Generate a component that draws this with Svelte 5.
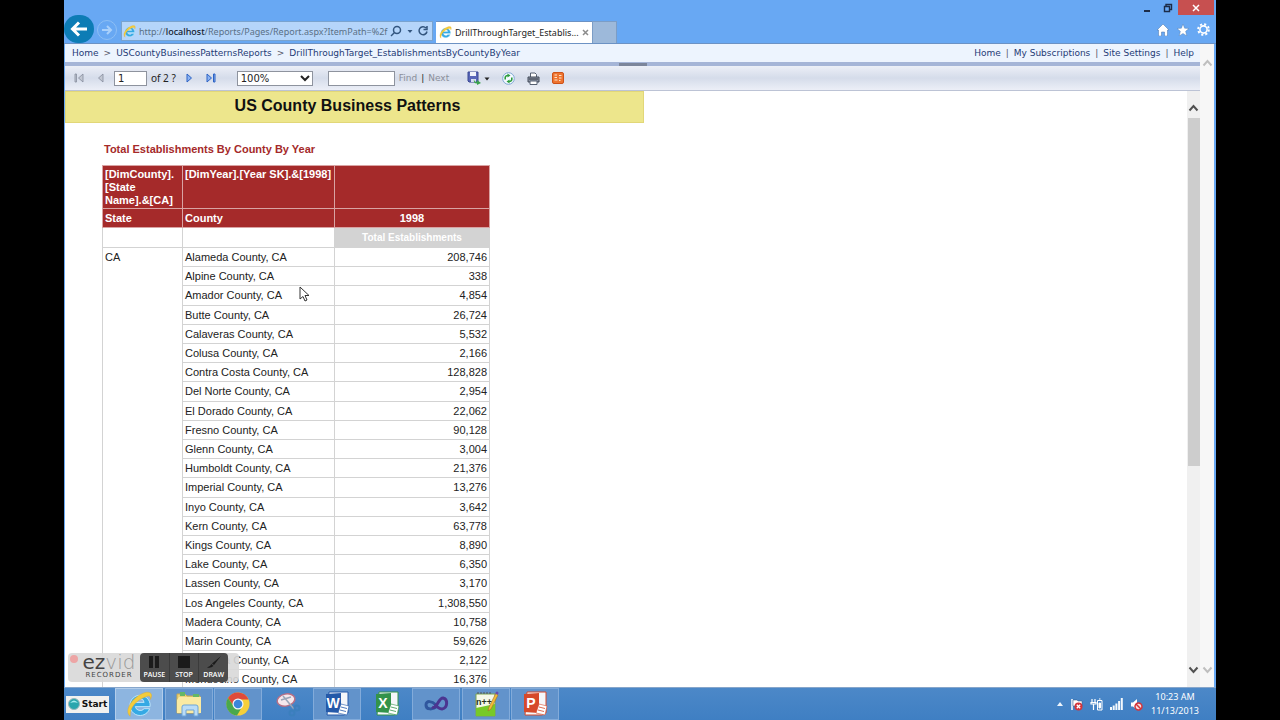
<script lang="ts">
	const rows: [string, string][] = [
		['Alameda', '208,746'],
		['Alpine', '338'],
		['Amador', '4,854'],
		['Butte', '26,724'],
		['Calaveras', '5,532'],
		['Colusa', '2,166'],
		['Contra Costa', '128,828'],
		['Del Norte', '2,954'],
		['El Dorado', '22,062'],
		['Fresno', '90,128'],
		['Glenn', '3,004'],
		['Humboldt', '21,376'],
		['Imperial', '13,276'],
		['Inyo', '3,642'],
		['Kern', '63,778'],
		['Kings', '8,890'],
		['Lake', '6,350'],
		['Lassen', '3,170'],
		['Los Angeles', '1,308,550'],
		['Madera', '10,758'],
		['Marin', '59,626'],
		['Mariposa', '2,122'],
		['Mendocino', '16,376']
	];

	const apps = [
		{ id: 'ie', label: 'Internet Explorer', state: 'active' },
		{ id: 'explorer', label: 'File Explorer', state: 'open' },
		{ id: 'chrome', label: 'Google Chrome', state: 'open' },
		{ id: 'snip', label: 'Snipping Tool', state: '' },
		{ id: 'word', label: 'Word', state: 'open' },
		{ id: 'excel', label: 'Excel', state: '' },
		{ id: 'vs', label: 'Visual Studio', state: 'open' },
		{ id: 'npp', label: 'Notepad++', state: 'open' },
		{ id: 'ppt', label: 'PowerPoint', state: 'open' }
	];

	let page = $state('1');
	let zoom = $state('100%');
	let search = $state('');
</script>

{#snippet ieLogo(size: number)}
	<svg width={size} height={size} viewBox="0 0 32 32" aria-hidden="true">
		<path
			d="M28 21A12 12 0 1 1 28.500 15V18.500H11A6 6 0 0 0 21.500 21ZM11 13.500H21.500A5.300 5.300 0 0 0 11 13.500Z"
			fill="#35a9e4"
			stroke="#c9efff"
			stroke-width="1"
			fill-rule="evenodd"
		/>
		<path
			d="M5 30C-3 24 7 7 22 2C30 0 32 4 29 10C29.500 5.500 27 5 23 7C12 11 4 20 5 30Z"
			fill="#f3cc3c"
			stroke="#e0a92c"
			stroke-width=".5"
		/>
	</svg>
{/snippet}

{#snippet officeIcon(letter: string, color: string)}
	<svg width="26" height="26" viewBox="0 0 26 26" aria-hidden="true">
		<path d="M5 1H24V22L20 24H3Z" fill="#f5f7fa" stroke={color} />
		<path d="M2 3L17 2V22L2 21Z" fill={color} />
		<path d="M17 13L25 15L23 24L14 22Z" fill="#fff" stroke={color} stroke-width=".6" />
		<path d="M17 16L23 17.500M16 19L22 20.500" stroke={color} stroke-width=".8" />
		<text x="9" y="17" text-anchor="middle" font-size="14" font-weight="bold" fill="#fff">
			{letter}
		</text>
	</svg>
{/snippet}

<div class="screen">
	<div class="browser">
		<header class="chrome">
			<div class="window-buttons">
				<button aria-label="Minimize">
					<svg width="10" height="10" viewBox="0 0 10 10"><path d="M2 8H8" stroke="#1c2c48" stroke-width="2" /></svg>
				</button>
				<button aria-label="Restore">
					<svg width="10" height="10" viewBox="0 0 10 10" fill="none" stroke="#1c2c48">
						<path d="M3 3V1.500H8.500V6.500H7M1.500 3.500H6.500V8.500H1.500Z" stroke-width="1.400" />
					</svg>
				</button>
				<button class="close" aria-label="Close">
					<svg width="8" height="8" viewBox="0 0 8 8"><path d="M1 1L7 7M7 1L1 7" stroke="#fff" stroke-width="1.500" /></svg>
				</button>
			</div>

			<div class="nav-row">
				<button class="back" aria-label="Back">
					<svg width="18" height="18" viewBox="0 0 18 18" fill="none" stroke="#fff" stroke-width="3">
						<path d="M17 9H3M9 2.500L2.500 9L9 15.500" />
					</svg>
				</button>
				<button class="forward" aria-label="Forward">
					<svg width="12" height="12" viewBox="0 0 12 12" fill="none" stroke="#a9d0fb" stroke-width="2">
						<path d="M1 6H10M6 2L10 6L6 10" />
					</svg>
				</button>
				<div class="address">
					{@render ieLogo(13)}
					<span class="url">http://<b>localhost</b>/Reports/Pages/Report.aspx?ItemPath=%2f</span>
					<button aria-label="Search">
						<svg width="12" height="12" viewBox="0 0 12 12" fill="none" stroke="#33567f" stroke-width="1.500">
							<circle cx="7" cy="5" r="3.500" /><path d="M4.500 7.500L1 11" />
						</svg>
					</button>
					<button aria-label="Show address list">
						<svg width="8" height="8" viewBox="0 0 8 8"><path d="M1.500 3H6.500L4 6Z" fill="#33567f" /></svg>
					</button>
					<button aria-label="Refresh">
						<svg width="12" height="12" viewBox="0 0 12 12" fill="none" stroke="#33567f" stroke-width="1.500">
							<path d="M9 3A4 4 0 1 0 10 6.500M10 1V4.500H6.500" />
						</svg>
					</button>
				</div>
				<div class="tab">
					{@render ieLogo(13)}
					<span>DrillThroughTarget_Establis...</span>
					<button aria-label="Close tab">
						<svg width="7" height="7" viewBox="0 0 7 7"><path d="M1 1L6 6M6 1L1 6" stroke="#8c8c8c" stroke-width="1.500" /></svg>
					</button>
				</div>
				<button class="new-tab" aria-label="New tab"></button>
				<div class="tools">
					<button aria-label="Home">
						<svg width="12" height="12" viewBox="0 0 12 12"><path d="M6 0L12 6H10.500V12H7.500V8H4.500V12H1.500V6H0Z" fill="#fff" stroke="#4773a8" stroke-width=".5" /></svg>
					</button>
					<button aria-label="Favorites">
						<svg width="12" height="12" viewBox="0 0 12 12"><path d="M6 0L7.600 4.200L12 4.500L8.600 7.300L9.800 12L6 9.400L2.200 12L3.400 7.300L0 4.500L4.400 4.200Z" fill="#fff" stroke="#4773a8" stroke-width=".4" /></svg>
					</button>
					<button aria-label="Tools">
						<svg width="13" height="13" viewBox="0 0 13 13" fill="none" stroke="#fff">
							<circle cx="6.500" cy="6.500" r="3.600" stroke-width="1.600" />
							<circle cx="6.500" cy="6.500" r="5.300" stroke-width="2" stroke-dasharray="2.100 2.063" />
						</svg>
					</button>
				</div>
			</div>
		</header>

		<div class="page">
			<main>
				<div class="crumbs">
					<nav aria-label="Breadcrumb">
						<a href="#home">Home</a><i>&gt;</i>
						<a href="#reports">USCountyBusinessPatternsReports</a><i>&gt;</i>
						<a href="#report">DrillThroughTarget_EstablishmentsByCountyByYear</a>
					</nav>
					<nav aria-label="Site">
						<a href="#home">Home</a><i>|</i>
						<a href="#subscriptions">My Subscriptions</a><i>|</i>
						<a href="#settings">Site Settings</a><i>|</i>
						<a href="#help">Help</a>
					</nav>
				</div>
				<div class="splitter"><span></span></div>

				<div class="toolbar">
					<div class="pager">
						<button aria-label="First page">
							<svg width="10" height="10" viewBox="0 0 10 10" fill="#c2c7d2" stroke="#858d9d" stroke-width=".8"><path d="M1 1H2.500V9H1ZM9 1V9L4.500 5Z" /></svg>
						</button>
						<button aria-label="Previous page">
							<svg width="10" height="10" viewBox="0 0 10 10" fill="#c2c7d2" stroke="#858d9d" stroke-width=".8"><path d="M7 1V9L2.500 5Z" /></svg>
						</button>
						<input aria-label="Current page" bind:value={page} />
						<span class="of">of 2 ?</span>
						<button aria-label="Next page">
							<svg width="10" height="10" viewBox="0 0 10 10" fill="#8ab2f2" stroke="#2c62c4"><path d="M3 1V9L7.500 5Z" /></svg>
						</button>
						<button aria-label="Last page">
							<svg width="10" height="10" viewBox="0 0 10 10" fill="#8ab2f2" stroke="#2c62c4"><path d="M1 1V9L5.500 5ZM7.500 1H9V9H7.500Z" /></svg>
						</button>
					</div>
					<div class="zoom">
						<select aria-label="Zoom" bind:value={zoom}>
							<option>100%</option>
							<option>75%</option>
							<option>50%</option>
						</select>
						<svg width="10" height="7" viewBox="0 0 10 7" aria-hidden="true"><path d="M1 1L5 5L9 1" fill="none" stroke="#222" stroke-width="2" /></svg>
					</div>
					<div class="find">
						<input aria-label="Find text" bind:value={search} />
						<button>Find</button><span>|</span><button>Next</button>
					</div>
					<div class="actions">
						<button aria-label="Export">
							<svg width="23" height="14" viewBox="0 0 23 14">
								<path d="M1 1H11V11H2L1 10Z" fill="#5866b8" stroke="#3b4893" />
								<path d="M3 1H9V5H3Z" fill="#f0f3fb" /><path d="M4 8H9V11H4Z" fill="#d8dff2" />
								<path d="M7 8Q7 11 10 11V9L14 12L10 14V12.500Q6 12.500 7 8Z" fill="#3aa24c" />
								<path d="M17.500 6.500H22.500L20 9.500Z" fill="#222" />
							</svg>
						</button>
						<button aria-label="Refresh report">
							<svg width="13" height="13" viewBox="0 0 13 13" fill="none">
								<circle cx="6.500" cy="6.500" r="5.800" fill="#f4faff" stroke="#7ea7d4" />
								<path d="M3.200 7.500V5.500Q3.500 3.500 6 3.500M9.800 5.500V7.500Q9.500 9.500 7 9.500" stroke="#2c9c3c" stroke-width="1.600" />
								<path d="M5.500 1.500L8.500 3.500L5.500 5.500ZM7.500 7.500L4.500 9.500L7.500 11.500Z" fill="#2c9c3c" />
							</svg>
						</button>
						<button aria-label="Print">
							<svg width="13" height="13" viewBox="0 0 13 13">
								<path d="M3.500 5V1H8L9.500 2.500V5" fill="#fff" stroke="#555f70" />
								<path d="M1 5H12V10H1Z" fill="#8b93a3" stroke="#434a58" /><path d="M2 7H11" stroke="#353b47" />
								<path d="M3 9H10V12.500H3Z" fill="#fff" stroke="#555f70" />
							</svg>
						</button>
						<button aria-label="Export to data feed">
							<svg width="12" height="12" viewBox="0 0 12 12">
								<rect x=".5" y=".5" width="11" height="11" rx="1.500" fill="#ee7430" stroke="#cd5218" />
								<path d="M2.500 3H5M2.500 5.500H5M2.500 8H5.500M7 3.500H9.500M7 6H9.500M7 8.500H8.500" stroke="#ffe5cb" stroke-width="1.200" />
							</svg>
						</button>
					</div>
				</div>

				<div class="viewer">
					<article class="report">
						<h1>US County Business Patterns</h1>
						<h2>Total Establishments By County By Year</h2>
						<table>
							<colgroup><col class="c-state" /><col class="c-county" /><col class="c-total" /></colgroup>
							<thead>
								<tr class="params">
									<th>[DimCounty].<br />[State<br />Name].&amp;[CA]</th>
									<th>[DimYear].[Year SK].&amp;[1998]</th>
									<th></th>
								</tr>
								<tr><th>State</th><th>County</th><th class="center">1998</th></tr>
								<tr class="measure"><td></td><td></td><th>Total Establishments</th></tr>
							</thead>
							<tbody>
								{#each rows as [county, total], i}
									<tr>
										{#if i === 0}<td rowspan={rows.length}>CA</td>{/if}
										<td>{county} County, CA</td>
										<td class="num">{total}</td>
									</tr>
								{/each}
							</tbody>
						</table>
						<svg class="cursor" width="11" height="16" viewBox="0 0 11 16" aria-hidden="true">
							<path d="M1 1V13L4 10.500L6 15L8 14L6 9.500H10Z" fill="#fff" stroke="#333" />
						</svg>
					</article>
					<div class="scrollbar inner">
						<svg width="11" height="8" viewBox="0 0 11 8"><path d="M1.500 6.500L5.500 2L9.500 6.500" /></svg>
						<div class="thumb"></div>
						<svg width="11" height="8" viewBox="0 0 11 8"><path d="M1.500 1.500L5.500 6L9.500 1.500" /></svg>
					</div>

					<div class="recorder">
						<span class="dot"></span>
						<div class="brand"><span>ez<em>vid</em></span><small>RECORDER</small></div>
						<div class="rec-buttons">
							<button>
								<svg width="12" height="12" viewBox="0 0 12 12"><path d="M1 0H5V12H1ZM7 0H11V12H7Z" /></svg>
								PAUSE
							</button>
							<button>
								<svg width="12" height="12" viewBox="0 0 12 12"><path d="M0 0H12V12H0Z" /></svg>
								STOP
							</button>
							<button>
								<svg width="14" height="12" viewBox="0 0 14 12"><path d="M14 0L7 9L5 7.500ZM4.500 8L6.500 10Q4 12.500 0 11.500Q3 11 4.500 8Z" /></svg>
								DRAW
							</button>
						</div>
					</div>
				</div>
			</main>
			<div class="scrollbar outer">
				<svg width="11" height="8" viewBox="0 0 11 8"><path d="M1.500 6.500L5.500 2L9.500 6.500" /></svg>
				<svg width="11" height="8" viewBox="0 0 11 8"><path d="M1.500 1.500L5.500 6L9.500 1.500" /></svg>
			</div>
		</div>
	</div>

	<footer class="taskbar">
		<button class="start">
			<svg width="12" height="12" viewBox="0 0 12 12" aria-hidden="true">
				<circle cx="6" cy="6" r="5.500" fill="#2aa6ad" stroke="#9ab8bd" /><path d="M2 5Q6 0 10 5Q6 3.500 2 5Z" fill="#a5eef0" />
			</svg>
			Start
		</button>
		<div class="apps">
			{#each apps as app}
				<button class={app.state} aria-label={app.label}>
					{#if app.id === 'ie'}
						{@render ieLogo(27)}
					{:else if app.id === 'explorer'}
						<svg width="28" height="26" viewBox="0 0 28 26">
							<path d="M2 3H10L12 5H25V22H2Z" fill="#ead27a" stroke="#c9a94e" />
							<path d="M5 1H10V5H5ZM18 3H24V7H18Z" fill="#65b766" /><path d="M4 6H26V22H2V9Z" fill="#faeaa2" />
							<path d="M7 25V16Q7 14 9 14H21Q23 14 23 16V25H19V19H11V25Z" fill="#b9dcf7" stroke="#6ca5d8" />
						</svg>
					{:else if app.id === 'chrome'}
						<svg width="24" height="24" viewBox="0 0 24 24">
							<circle cx="12" cy="12" r="11.500" fill="#f5cf3b" />
							<path d="M2 6A11.500 11.500 0 0 1 22.500 7.500H12L7 13Z" fill="#df4b3b" />
							<path d="M2 6A11.500 11.500 0 0 0 11 23.500L16 15L7.500 14Z" fill="#49a84c" />
							<circle cx="12" cy="12" r="5.500" fill="#f3f6f9" /><circle cx="12" cy="12" r="4.300" fill="#3b86d9" />
						</svg>
					{:else if app.id === 'snip'}
						<svg width="26" height="26" viewBox="0 0 26 26" fill="none">
							<ellipse cx="11" cy="9" rx="9" ry="6" transform="rotate(-12 11 9)" fill="#f5e8ed" stroke="#b76f85" stroke-width="1.500" />
							<path d="M6 9L16 6M8 5L19 18" stroke="#9aa5b7" stroke-width="1.500" />
							<circle cx="22" cy="17" r="2.500" stroke="#3b7fbd" stroke-width="2" /><circle cx="17" cy="22" r="2.500" stroke="#3b7fbd" stroke-width="2" />
						</svg>
					{:else if app.id === 'word'}
						{@render officeIcon('W', '#2459a9')}
					{:else if app.id === 'excel'}
						{@render officeIcon('X', '#33934a')}
					{:else if app.id === 'vs'}
						<svg width="26" height="18" viewBox="0 0 26 18" fill="none" stroke-width="3">
							<path d="M14 11C10 15 3 15 3 10C3 5 9 6 13 10" stroke="#30579e" />
							<path d="M9 12C14 15 15 3 20 3C25 4 25 13 19 14C16 14 14 12 12 9" stroke="#4b3591" />
						</svg>
					{:else if app.id === 'npp'}
						<svg width="26" height="26" viewBox="0 0 26 26">
							<path d="M3 3H22V25H3Z" fill="#f4f8e8" stroke="#7ba451" /><path d="M3 17L22 13V25H3Z" fill="#77c928" />
							<path d="M5 3V1M8 3V1M11 3V1M14 3V1M17 3V1" stroke="#555" />
							<text x="11" y="14" text-anchor="middle" font-size="9" font-weight="bold" fill="#273320">n++</text>
							<path d="M23 2L25 4L18 18L15 20L16 16Z" fill="#f2bd38" stroke="#a06b2a" stroke-width=".6" /><circle cx="24" cy="2" r="1.500" fill="#694aaf" />
						</svg>
					{:else}
						{@render officeIcon('P', '#d6492a')}
					{/if}
				</button>
			{/each}
		</div>
		<div class="tray">
			<svg width="6" height="4" viewBox="0 0 6 4"><path d="M0 4L3 0L6 4Z" fill="#eef5fc" /></svg>
			<svg width="13" height="13" viewBox="0 0 13 13">
				<path d="M2 1V12" stroke="#fff" stroke-width="1.500" /><path d="M3 2H7L8 3H12V8H3Z" fill="#fff" stroke="#34557c" stroke-width=".5" />
				<circle cx="8.500" cy="8.500" r="4" fill="#d3343b" /><path d="M6.800 6.800L10.200 10.200M10.200 6.800L6.800 10.200" stroke="#fff" stroke-width="1.300" />
			</svg>
			<svg width="13" height="13" viewBox="0 0 13 13" fill="none" stroke="#fff">
				<path d="M2 1V4M5 1V4M1 4.500H6V6H1ZM3.500 6V12" stroke-width="1.200" /><path d="M7.500 2.500H12V12H7.500ZM9 1H10.500" /><path d="M9 5H10.500V10H9Z" fill="#fff" />
			</svg>
			<svg width="13" height="12" viewBox="0 0 13 12"><path d="M0 9H2V12H0ZM2.700 7.500H4.700V12H2.700ZM5.400 5.500H7.400V12H5.400ZM8.100 3H10.100V12H8.100ZM10.800 0H12.800V12H10.800Z" fill="#f5f9fd" /></svg>
			<svg width="13" height="13" viewBox="0 0 13 13">
				<path d="M1 4.500H3L7 1V12L3 8.500H1Z" fill="#fff" /><circle cx="8.500" cy="8.500" r="3.500" fill="#f7dadb" stroke="#d3343b" stroke-width="1.500" /><path d="M6 6L11 11" stroke="#d3343b" stroke-width="1.500" />
			</svg>
			<div class="clock"><span>10:23 AM</span><span>11/13/2013</span></div>
		</div>
	</footer>
</div>

<style>
	:global(body) {
		margin: 0;
		background: #000;
	}

	.screen {
		height: 100vh;
		margin: 0 5%;
		display: flex;
		flex-direction: column;
		font-family: 'Liberation Sans', Arial, sans-serif;
		font-size: 11px;
		color: #222;
		overflow: hidden;
	}

	button {
		padding: 0;
		border: 0;
		background: none;
		font: inherit;
		color: inherit;
		display: flex;
		align-items: center;
		justify-content: center;
	}

	svg {
		flex: none;
	}

	.browser {
		flex: 1;
		min-height: 0;
		display: flex;
		flex-direction: column;
		background: #68a8f3;
	}

	.chrome {
		flex: none;
		border-bottom: 1px solid #6c92c4;
	}

	.window-buttons {
		display: flex;
		justify-content: flex-end;
		height: 15px;
		padding-right: 2px;
	}

	.window-buttons button {
		width: 21px;
	}

	.window-buttons .close {
		width: 36px;
		background: #c75050;
	}

	.nav-row {
		display: flex;
		align-items: flex-end;
		height: 28px;
	}

	.back {
		width: 30px;
		height: 28px;
		border-radius: 15px;
		background: #0d7cb5;
	}

	.forward {
		width: 20px;
		height: 20px;
		margin: 0 6px 3px 3px;
		border: 1px solid #8dbff5;
		border-radius: 50%;
		box-sizing: border-box;
	}

	.address {
		display: flex;
		align-items: center;
		gap: 3px;
		width: 312px;
		height: 20px;
		padding: 0 3px 0 1px;
		margin: 0 3px 2px -2px;
		box-sizing: border-box;
		border: 1px solid #79a3cf;
		background: #b5d5fa;
		font-family: 'Noto Sans', sans-serif;
		font-size: 9px;
		color: #5a7086;
	}

	.url {
		flex: 1;
		white-space: nowrap;
	}

	.url b {
		font-weight: 500;
		color: #14202e;
	}

	.address button {
		width: 12px;
	}

	.tab {
		display: flex;
		align-items: center;
		gap: 3px;
		width: 156px;
		height: 22px;
		padding: 0 4px 0 3px;
		box-sizing: border-box;
		border-top: 1px solid #6c92c4;
		background: #fff;
		font-family: 'Noto Sans', sans-serif;
		font-size: 9px;
		white-space: nowrap;
	}

	.tab span {
		flex: 1;
	}

	.new-tab {
		width: 25px;
		height: 22px;
		border: 1px solid #7b9dc6;
		border-bottom: 0;
		background: #9db9da;
		box-sizing: border-box;
	}

	.tools {
		display: flex;
		gap: 8px;
		margin: 0 6px 7px auto;
	}

	.page {
		flex: 1;
		min-height: 0;
		display: flex;
		margin: 0 2px 0 1px;
		background: #fff;
	}

	main {
		flex: 1;
		min-width: 0;
		display: flex;
		flex-direction: column;
	}

	.crumbs {
		display: flex;
		justify-content: space-between;
		padding: 0 6px 0 7px;
		line-height: 18px;
		background: #edf4fe;
		font-family: 'DejaVu Sans', Verdana, sans-serif;
		font-size: 9px;
		white-space: nowrap;
	}

	.crumbs nav {
		display: flex;
		gap: 5px;
	}

	.crumbs a {
		color: #1f3b76;
		text-decoration: none;
	}

	.crumbs i {
		font-style: normal;
		color: #55596a;
	}

	.splitter {
		display: flex;
		justify-content: center;
		align-items: flex-end;
		height: 4px;
		background: #a5b5d7;
	}

	.splitter span {
		width: 28px;
		height: 3px;
		background: #7c869b;
	}

	.toolbar {
		display: flex;
		align-items: center;
		height: 24px;
		padding-left: 9px;
		border-bottom: 1px solid #bcc3d5;
		background: linear-gradient(#eceff7, #d5dcea 50%, #eceff7);
		font-family: 'DejaVu Sans', Verdana, sans-serif;
		font-size: 10px;
		white-space: nowrap;
	}

	.toolbar input,
	select {
		height: 15px;
		padding: 0 3px;
		border: 1px solid #8e939e;
		border-radius: 0;
		box-sizing: border-box;
		background: #fff;
		color: #222;
		font: inherit;
	}

	.pager {
		display: flex;
		align-items: center;
		gap: 12px;
	}

	.pager input {
		width: 33px;
		margin-left: -4px;
	}

	.of {
		margin: 0 -4px 0 -8px;
		font-family: 'Noto Sans', sans-serif;
	}

	.zoom {
		position: relative;
		display: flex;
		margin-left: 21px;
	}

	.zoom select {
		width: 76px;
		appearance: none;
	}

	.zoom svg {
		position: absolute;
		right: 3px;
		top: 4px;
		pointer-events: none;
	}

	.find {
		display: flex;
		align-items: center;
		gap: 4px;
		margin-left: 15px;
		font-size: 9px;
	}

	.find input {
		width: 67px;
	}

	.find button {
		color: #8b8f9a;
	}

	.actions {
		display: flex;
		align-items: center;
		gap: 12px;
		margin-left: 18px;
	}

	.viewer {
		position: relative;
		flex: 1;
		min-height: 0;
		display: flex;
		overflow: hidden;
	}

	.report {
		position: relative;
		flex: 1;
		min-width: 0;
		overflow: hidden;
	}

	h1 {
		width: 579px;
		margin: 0;
		padding: 0 14px 2px 0;
		box-sizing: border-box;
		border: 1px solid #e2d778;
		background: #ede68c;
		font-size: 16px;
		line-height: 28px;
		text-align: center;
		color: #111;
	}

	h2 {
		margin: 18px 0 8px 39px;
		font-size: 11px;
		line-height: 16px;
		color: #a52a2a;
	}

	table {
		width: 388px;
		margin-left: 37px;
		border-collapse: collapse;
		table-layout: fixed;
		line-height: 13px;
	}

	.c-state {
		width: 80px;
	}

	.c-county {
		width: 152px;
	}

	th,
	td {
		height: 19px;
		padding: 3px 2px 0;
		box-sizing: border-box;
		border: 1px solid #d3d3d3;
		vertical-align: top;
		text-align: left;
		white-space: nowrap;
	}

	th {
		background: #a52a2a;
		border-color: #d9a3a3;
		color: #fff;
	}

	.center,
	.measure th {
		text-align: center;
	}

	.measure th {
		border-color: #d3d3d3;
		background: #d3d3d3;
		font-size: 10px;
	}

	.measure td,
	.measure th {
		height: 20px;
	}

	.params th {
		height: 43px;
		padding-top: 2px;
	}

	tbody {
		height: 442px;
	}

	td.num {
		text-align: right;
	}

	.cursor {
		position: absolute;
		left: 234px;
		top: 195px;
	}

	.scrollbar {
		flex: none;
		display: flex;
		flex-direction: column;
		align-items: center;
		justify-content: space-between;
		width: 13px;
		box-sizing: border-box;
		background: #f0f0f0;
	}

	.scrollbar path {
		fill: none;
		stroke: #505050;
		stroke-width: 2;
	}

	.inner {
		padding: 13px 0;
	}

	.thumb {
		width: 12px;
		height: 61%;
		margin: 6px 0 auto;
		background: #cdcdcd;
	}

	.outer {
		width: 14px;
		padding: 15px 0 13px;
		background: #f7f7f7;
	}

	.outer path {
		stroke: #bfbfbf;
	}

	.recorder {
		position: absolute;
		left: 3px;
		bottom: 5px;
		display: flex;
		width: 171px;
		height: 29px;
		border-radius: 4px;
		background: rgba(216, 216, 216, 0.9);
	}

	.dot {
		width: 8px;
		height: 8px;
		margin: 2px 0 0 2px;
		border-radius: 50%;
		background: #eda5a5;
	}

	.brand {
		display: flex;
		flex-direction: column;
		width: 62px;
		align-items: center;
		font-family: 'DejaVu Sans', sans-serif;
		font-size: 20px;
		line-height: 18px;
		color: #444;
	}

	.brand em {
		font-style: normal;
		font-weight: 200;
		color: #999;
	}

	.brand small {
		font-size: 7px;
		line-height: 8px;
		letter-spacing: 1px;
	}

	.rec-buttons {
		display: flex;
		width: 88px;
		border-radius: 4px;
		background: #4c4c4c;
		overflow: hidden;
	}

	.rec-buttons button {
		flex: 1;
		flex-direction: column;
		gap: 2px;
		font-family: 'Open Sans', sans-serif;
		font-size: 7px;
		line-height: 9px;
		font-weight: 600;
		color: #fff;
	}

	.rec-buttons button + button {
		border-left: 1px solid #3b3b3b;
	}

	.rec-buttons path {
		fill: #1b1b1b;
	}

	.taskbar {
		flex: none;
		display: flex;
		align-items: center;
		height: 33px;
		padding: 0 16px 0 2px;
		border-top: 1px solid #86a6cb;
		box-sizing: border-box;
		background: linear-gradient(#4c88c8, #3f7fc3);
	}

	.start {
		width: 43px;
		height: 17px;
		margin-right: 6px;
		gap: 2px;
		background: #f1f1ef;
		font-family: 'DejaVu Sans', sans-serif;
		font-size: 9px;
		font-weight: bold;
		color: #111;
	}

	.apps {
		display: flex;
		justify-content: space-between;
		align-self: stretch;
		width: 444px;
	}

	.apps button {
		width: 48px;
		border: 1px solid transparent;
		box-sizing: border-box;
	}

	.apps .open {
		border-color: #82abda;
		background: #6293cb;
	}

	.apps .active {
		border-color: #b2cdeb;
		background: #8db5e0;
	}

	.tray {
		display: flex;
		align-items: center;
		gap: 7px;
		margin-left: auto;
	}

	.clock {
		display: flex;
		flex-direction: column;
		align-items: center;
		width: 50px;
		font-family: 'Noto Sans', sans-serif;
		font-size: 9px;
		line-height: 14px;
		color: #fff;
	}
</style>
